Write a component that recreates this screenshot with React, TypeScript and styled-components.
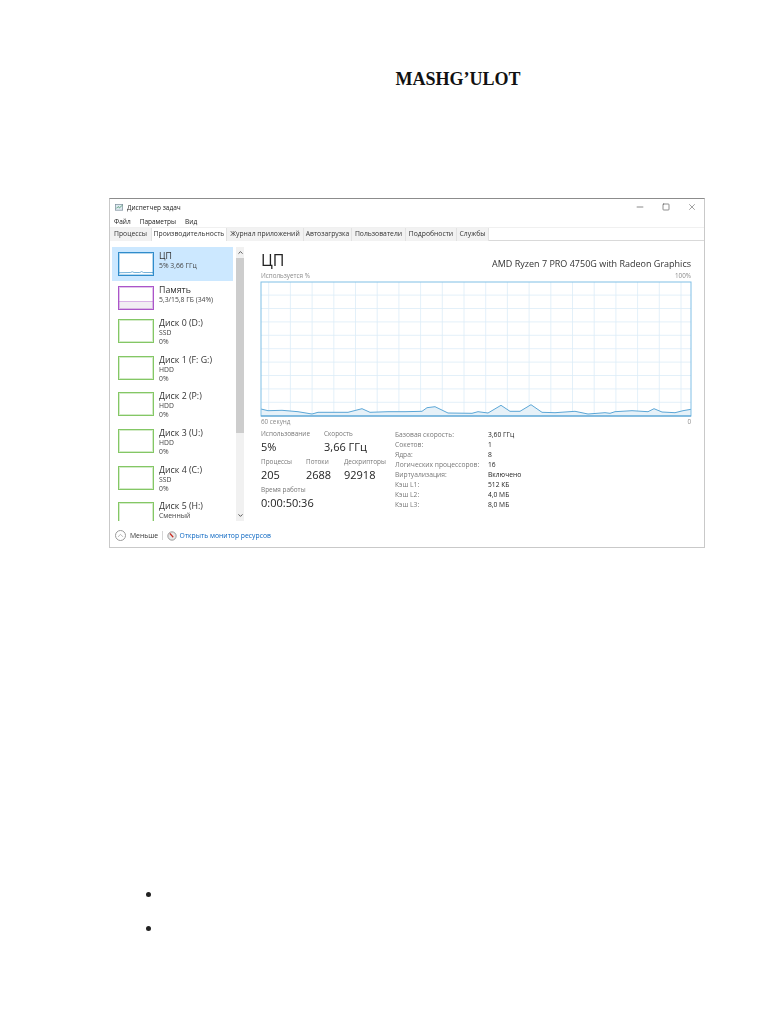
import styled, { createGlobalStyle } from 'styled-components'
import { ChevronDown, ChevronUp, Minus, Square, X } from 'lucide-react'

const tabs = [
  { label: 'Процессы', width: 42 },
  { label: 'Производительность', width: 75, active: true },
  { label: 'Журнал приложений', width: 77 },
  { label: 'Автозагрузка', width: 48 },
  { label: 'Пользователи', width: 54 },
  { label: 'Подробности', width: 51 },
  { label: 'Службы', width: 32 },
]

const disks = [
  { name: 'Диск 0 (D:)', kind: 'SSD', load: '0%' },
  { name: 'Диск 1 (F: G:)', kind: 'HDD', load: '0%' },
  { name: 'Диск 2 (P:)', kind: 'HDD', load: '0%' },
  { name: 'Диск 3 (U:)', kind: 'HDD', load: '0%' },
  { name: 'Диск 4 (C:)', kind: 'SSD', load: '0%' },
  { name: 'Диск 5 (H:)', kind: 'Сменный' },
]

const specs = [
  ['Базовая скорость:', '3,60 ГГц'],
  ['Сокетов:', '1'],
  ['Ядра:', '8'],
  ['Логических процессоров:', '16'],
  ['Виртуализация:', 'Включено'],
  ['Кэш L1:', '512 КБ'],
  ['Кэш L2:', '4,0 МБ'],
  ['Кэш L3:', '8,0 МБ'],
]

const line =
  '261,409 268,410.7 282,410.3 298,411.7 312,414 318,412.3 348,412.3 362,408.7 370,412.3 388,411.7 405,411.7 422,411.3 427,407.7 435,406.7 448,413 472,413.3 478,411.7 488,413 501,405.3 510,411.3 520,411.3 531,404.7 542,412.3 555,412.7 575,411.3 588,414 605,412.7 610,413.3 615,411.7 632,410.7 648,411.7 654,408.7 662,412 675,412.7 683,410.7 691,409.3'

const columns = Array.from({ length: 20 }, (_, i) => 268.7 + i * 21.7)
const rows = Array.from({ length: 9 }, (_, i) => 295.1 + i * 13.4)

const App = () => (
  <Page>
    <GlobalStyle />
    <Title>MASHG’ULOT</Title>
    <Window>
      <TitleBar>
        <AppIcon viewBox="0 0 10 10">
          <rect x="0.5" y="1.5" width="8" height="6.5" fill="#dfeaf2" stroke="#7d8f9c" strokeWidth="0.8" />
          <path d="M1.5 6 L3.5 4 L5 5.5 L8 2.5" fill="none" stroke="#3f8f5f" strokeWidth="0.9" />
        </AppIcon>
        <WindowName>Диспетчер задач</WindowName>
        <Controls>
          <Minus size={10} strokeWidth={1.5} />
          <Square size={8} strokeWidth={1.8} />
          <X size={10} strokeWidth={1.2} />
        </Controls>
      </TitleBar>
      <MenuBar>
        <span>Файл</span>
        <span>Параметры</span>
        <span>Вид</span>
      </MenuBar>
      <TabRow>
        {tabs.map(tab => (
          <Tab key={tab.label} $width={tab.width} $active={tab.active}>
            {tab.label}
          </Tab>
        ))}
      </TabRow>
      <Body>
        <Sidebar>
          <Item $height={34} $selected>
            <Thumb $color="#2f8ccb">
              <ThumbLine viewBox="0 0 36 24" preserveAspectRatio="none">
                <path
                  d="M0 21.5 L12 21.3 L14 20.5 L16 21.3 L22 21.3 L24 20.3 L26 21.3 L36 21.3"
                  fill="none"
                  stroke="#2a86c2"
                  strokeWidth="0.7"
                />
              </ThumbLine>
            </Thumb>
            <ItemText>
              <ItemName>ЦП</ItemName>
              <ItemSub>5% 3,66 ГГц</ItemSub>
            </ItemText>
          </Item>
          <Item $height={33}>
            <Thumb $color="#ab55c9">
              <MemoryFill />
            </Thumb>
            <ItemText>
              <ItemName>Память</ItemName>
              <ItemSub>5,3/15,8 ГБ (34%)</ItemSub>
            </ItemText>
          </Item>
          {disks.map(disk => (
            <Item key={disk.name} $height={36.7}>
              <Thumb $color="#84c765" />
              <ItemText>
                <ItemName>{disk.name}</ItemName>
                <ItemSub>{disk.kind}</ItemSub>
                {disk.load && <ItemSub>{disk.load}</ItemSub>}
              </ItemText>
            </Item>
          ))}
        </Sidebar>
        <Scrollbar>
          <ChevronUp size={7} strokeWidth={3} />
          <ScrollThumb />
          <ChevronDown size={7} strokeWidth={3} />
        </Scrollbar>
        <Main>
          <MainHead>
            <Heading>ЦП</Heading>
            <Cpu>AMD Ryzen 7 PRO 4750G with Radeon Graphics</Cpu>
          </MainHead>
          <AxisRow>
            <span>Используется %</span>
            <span>100%</span>
          </AxisRow>
          <Graph viewBox="260 281 432 136">
            {columns.map(x => (
              <line key={x} x1={x} x2={x} y1={282} y2={416} stroke="#dcecf7" strokeWidth="0.8" />
            ))}
            {rows.map(y => (
              <line key={y} x1={261} x2={691} y1={y} y2={y} stroke="#dcecf7" strokeWidth="0.8" />
            ))}
            <polygon points={`261,416 ${line} 691,416`} fill="#e6f1f8" />
            <polyline points={line} fill="none" stroke="#5ba6d6" strokeWidth="1" />
            <rect x="261" y="282" width="430" height="134" fill="none" stroke="#80bfe6" strokeWidth="1" />
            <line x1={261} x2={691} y1={416} y2={416} stroke="#4e9cd0" strokeWidth="1.2" />
          </Graph>
          <AxisRow>
            <span>60 секунд</span>
            <span>0</span>
          </AxisRow>
          <Details>
            <Stats>
              <StatRow>
                <Stat $width={63}>
                  <StatLabel>Использование</StatLabel>
                  <StatValue>5%</StatValue>
                </Stat>
                <Stat>
                  <StatLabel>Скорость</StatLabel>
                  <StatValue>3,66 ГГц</StatValue>
                </Stat>
              </StatRow>
              <StatRow>
                <Stat $width={45}>
                  <StatLabel>Процессы</StatLabel>
                  <StatValue>205</StatValue>
                </Stat>
                <Stat $width={38}>
                  <StatLabel>Потоки</StatLabel>
                  <StatValue>2688</StatValue>
                </Stat>
                <Stat>
                  <StatLabel>Дескрипторы</StatLabel>
                  <StatValue>92918</StatValue>
                </Stat>
              </StatRow>
              <StatRow>
                <Stat>
                  <StatLabel>Время работы</StatLabel>
                  <StatValue>0:00:50:36</StatValue>
                </Stat>
              </StatRow>
            </Stats>
            <Specs>
              {specs.map(([label, value]) => (
                <SpecRow key={label}>
                  <SpecLabel>{label}</SpecLabel>
                  <SpecValue>{value}</SpecValue>
                </SpecRow>
              ))}
            </Specs>
          </Details>
        </Main>
      </Body>
      <Footer>
        <LessButton>
          <ChevronUp size={9} strokeWidth={1.2} />
        </LessButton>
        <span>Меньше</span>
        <Divider />
        <MonitorIcon viewBox="0 0 12 12">
          <circle cx="6" cy="6" r="5" fill="#e8e8e8" stroke="#8a8a8a" strokeWidth="1" />
          <path d="M3.5 3 L7.5 7.5" stroke="#c8281e" strokeWidth="1.4" />
        </MonitorIcon>
        <MonitorLink>Открыть монитор ресурсов</MonitorLink>
      </Footer>
    </Window>
    <Bullets>
      <li />
      <li />
    </Bullets>
  </Page>
)

const GlobalStyle = createGlobalStyle`
  body {
    margin: 0;
    background: #fff;
  }
`

const Page = styled.div`
  box-sizing: border-box;
  width: 768px;
  height: 1024px;
  padding: 68px 63px 0 109px;
  overflow: hidden;
`

const Title = styled.h1`
  margin: 0;
  padding-left: 102px;
  height: 22px;
  text-align: center;
  font: bold 18px/22px 'Liberation Serif', serif;
  color: #111;
`

const Window = styled.div`
  box-sizing: border-box;
  display: flex;
  flex-direction: column;
  width: 596px;
  height: 350px;
  margin-top: 108px;
  border: 1px solid #c9c9c9;
  border-top-color: #8c8c8c;
  font-family: 'Open Sans', sans-serif;
  color: #333;
  filter: blur(0.45px);
`

const TitleBar = styled.div`
  display: flex;
  align-items: center;
  height: 16px;
  padding: 0 7px 0 5px;
`

const AppIcon = styled.svg`
  width: 9px;
  height: 9px;
  margin-right: 3px;
`

const WindowName = styled.span`
  font-size: 6.5px;
  color: #222;
`

const Controls = styled.div`
  display: flex;
  align-items: center;
  gap: 17px;
  margin-left: auto;
  color: #444;
`

const MenuBar = styled.div`
  display: flex;
  gap: 9px;
  height: 12px;
  align-items: center;
  padding-left: 4px;
  border-bottom: 1px solid #f0f0f0;
  font-size: 6.5px;
  color: #222;
`

const TabRow = styled.div`
  display: flex;
  height: 13px;
  box-sizing: border-box;
  border-bottom: 1px solid #d9d9d9;
`

const Tab = styled.div<{ $width: number; $active?: boolean }>`
  box-sizing: border-box;
  width: ${p => p.$width}px;
  height: 13px;
  line-height: 12px;
  text-align: center;
  white-space: nowrap;
  font-size: 6.8px;
  color: #333;
  background: ${p => (p.$active ? '#fff' : '#f2f2f2')};
  border-right: 1px solid #e2e2e2;
`

const Body = styled.div`
  display: flex;
  flex: 1;
  min-height: 0;
`

const Sidebar = styled.div`
  box-sizing: border-box;
  width: 121px;
  margin: 6px 0 3px 2px;
  overflow: hidden;
  flex-shrink: 0;
`

const Item = styled.div<{ $height: number; $selected?: boolean }>`
  box-sizing: border-box;
  display: flex;
  gap: 5px;
  height: ${p => p.$height}px;
  padding: 5px 0 0 6px;
  background: ${p => (p.$selected ? '#cce8ff' : 'transparent')};
`

const Thumb = styled.div<{ $color: string }>`
  box-sizing: border-box;
  position: relative;
  display: flex;
  flex-direction: column;
  justify-content: flex-end;
  flex-shrink: 0;
  width: 36px;
  height: 24px;
  border: 1px solid ${p => p.$color};
  background: #fff;

  &::after {
    content: '';
    position: absolute;
    inset: 0;
    border: 1px solid ${p => p.$color};
    opacity: 0.35;
  }
`

const ThumbLine = styled.svg`
  position: absolute;
  inset: 0;
  width: 100%;
  height: 100%;
`

const MemoryFill = styled.div`
  height: 7px;
  background: #f1eef3;
  border-top: 1px solid #d9b3e6;
`

const ItemText = styled.div`
  display: flex;
  flex-direction: column;
`

const ItemName = styled.span`
  font-size: 8.8px;
  line-height: 9px;
  color: #333;
  white-space: nowrap;
`

const ItemSub = styled.span`
  font-size: 6.8px;
  line-height: 9px;
  color: #444;
  white-space: nowrap;
`

const Scrollbar = styled.div`
  display: flex;
  flex-direction: column;
  align-items: center;
  flex-shrink: 0;
  box-sizing: border-box;
  width: 8px;
  margin: 6px 0 3px 3px;
  padding: 2px 0;
  background: #f1f1f1;
  color: #444;
`

const ScrollThumb = styled.div`
  width: 100%;
  height: 175px;
  margin: 2px 0 auto;
  background: #cdcdcd;
`

const Main = styled.div`
  display: flex;
  flex-direction: column;
  width: 432px;
  margin-left: 16px;
  padding-top: 8px;
`

const MainHead = styled.div`
  display: flex;
  justify-content: space-between;
  align-items: flex-end;
  height: 22px;
  padding: 0 1px;
`

const Heading = styled.h2`
  margin: 0;
  font-size: 16px;
  line-height: 22px;
  font-weight: 400;
  color: #222;
`

const Cpu = styled.span`
  font-size: 9px;
  line-height: 12px;
  margin-bottom: 1px;
  color: #333;
  white-space: nowrap;
`

const AxisRow = styled.div`
  display: flex;
  justify-content: space-between;
  height: 10px;
  padding: 0 1px;
  line-height: 10px;
  font-size: 6.3px;
  color: #8a8a8a;
`

const Graph = styled.svg`
  display: block;
  width: 432px;
  height: 136px;
  flex-shrink: 0;
`

const Details = styled.div`
  display: flex;
  margin-top: 2px;
  padding-left: 1px;
`

const Stats = styled.div`
  display: flex;
  flex-direction: column;
  width: 134px;
  gap: 2px;
`

const StatRow = styled.div`
  display: flex;
`

const Stat = styled.div<{ $width?: number }>`
  display: flex;
  flex-direction: column;
  width: ${p => (p.$width ? `${p.$width}px` : 'auto')};
`

const StatLabel = styled.span`
  font-size: 6.4px;
  line-height: 10px;
  color: #777;
  white-space: nowrap;
`

const StatValue = styled.span`
  font-size: 11px;
  line-height: 16px;
  color: #222;
  white-space: nowrap;
`

const Specs = styled.div`
  display: flex;
  flex-direction: column;
  margin-top: 1px;
`

const SpecRow = styled.div`
  display: flex;
  height: 10px;
  line-height: 10px;
  font-size: 6.7px;
`

const SpecLabel = styled.span`
  width: 93px;
  color: #777;
  white-space: nowrap;
`

const SpecValue = styled.span`
  color: #222;
  white-space: nowrap;
`

const Footer = styled.div`
  display: flex;
  align-items: center;
  height: 23px;
  padding-left: 5px;
  font-size: 6.8px;
  color: #333;
`

const LessButton = styled.div`
  box-sizing: border-box;
  display: flex;
  align-items: center;
  justify-content: center;
  width: 11px;
  height: 11px;
  margin-right: 4px;
  border: 1px solid #999;
  border-radius: 50%;
  color: #666;
`

const Divider = styled.div`
  width: 1px;
  height: 9px;
  margin: 0 4px 0 4px;
  background: #d5d5d5;
`

const MonitorIcon = styled.svg`
  width: 10px;
  height: 10px;
  margin-right: 2.5px;
`

const MonitorLink = styled.span`
  color: #0a66c2;
`

const Bullets = styled.ul`
  margin: 329px 0 0 37px;
  padding: 0;
  list-style: none;

  li {
    display: flex;
    align-items: center;
    height: 34px;
  }

  li::before {
    content: '';
    width: 5px;
    height: 5px;
    border-radius: 50%;
    background: #222;
  }
`

export default App
